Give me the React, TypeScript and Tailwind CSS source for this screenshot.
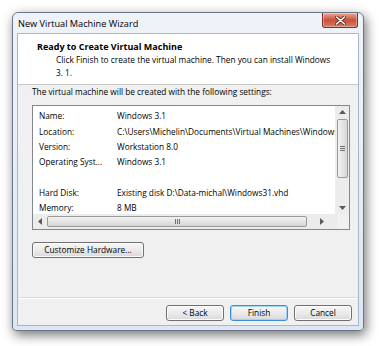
const rows = [
  { label: "Name:", value: "Windows 3.1" },
  { label: "Location:", value: "C:\\Users\\Michelin\\Documents\\Virtual Machines\\Windows 3.1" },
  { label: "Version:", value: "Workstation 8.0" },
  { label: "Operating Syst...", value: "Windows 3.1" },
  { label: "", value: "" },
  { label: "Hard Disk:", value: "Existing disk D:\\Data-michal\\Windows31.vhd" },
  { label: "Memory:", value: "8 MB" },
  { label: "Network Adapter:", value: "NAT" },
];

const WinButton = ({ text, width, primary }: { text: string; width: string; primary?: boolean }) => (
  <div
    className={`${width} flex h-[16px] items-center justify-center rounded-[3px] border bg-gradient-to-b from-[#f6f6f6] via-[#ebebeb] to-[#d9d9d9] text-[8.3px] text-black ${
      primary ? "border-[#3c8ed8] shadow-[inset_0_0_0_1px_#9fd4f5]" : "border-[#707070] shadow-[inset_0_0_0_1px_#fcfcfc]"
    }`}
  >
    {text}
  </div>
);

const Arrow = ({ dir }: { dir: "up" | "down" | "left" | "right" }) => {
  const pts = {
    up: "0,4 3.5,0 7,4",
    down: "0,0 3.5,4 7,0",
    left: "4,0 0,3.5 4,7",
    right: "0,0 4,3.5 0,7",
  }[dir];
  const vertical = dir === "up" || dir === "down";
  return (
    <svg width={vertical ? 7 : 4} height={vertical ? 4 : 7} viewBox={vertical ? "0 0 7 4" : "0 0 4 7"}>
      <polygon points={pts} fill="#5a5a5a" />
    </svg>
  );
};

export default function App() {
  return (
    <div className="h-[346px] w-[379px] bg-white pl-[12px] pt-[12px]" style={{ fontFamily: '"Open Sans", "Noto Sans", sans-serif' }}>
      <div className="flex h-[319px] w-[352px] flex-col rounded-t-[6px] rounded-b-[4px] border border-[#6b7786] bg-gradient-to-b from-[#eef3f9] to-[#dce7f3] shadow-[2px_4px_12px_rgba(0,0,0,0.55)]">
        {/* title bar */}
        <div className="flex h-[20px] items-start justify-between pl-[5px] pr-[5px]">
          <span className="pt-[5px] text-[9.2px] leading-[12px] text-black">New Virtual Machine Wizard</span>
          <div className="flex h-[15px] w-[36px] items-center justify-center rounded-b-[3px] border border-t-0 border-[#7a3030] bg-gradient-to-b from-[#e8a99a] via-[#c9503c] to-[#d67a5e] shadow-[inset_0_0_0_1px_rgba(255,255,255,0.35)]">
            <svg width="11" height="9" viewBox="0 0 11 9">
              <path d="M1.5 1 L9.5 8 M9.5 1 L1.5 8" stroke="#5a2a22" strokeWidth="3.2" strokeLinecap="round" />
              <path d="M1.5 1 L9.5 8 M9.5 1 L1.5 8" stroke="#ffffff" strokeWidth="1.6" strokeLinecap="round" />
            </svg>
          </div>
        </div>

        {/* client area */}
        <div className="mx-[4px] flex h-[293px] flex-col border border-[#a8b6c6] bg-[#f0f0f0]">
          <div className="h-[51px] border-b border-[#c8c8c8] bg-white pl-[19px] pt-[6px] text-black">
            <div className="text-[9px] font-bold leading-[13px]">Ready to Create Virtual Machine</div>
            <div className="pl-[19px] text-[8.3px] leading-[13px]">
              Click Finish to create the virtual machine. Then you can install Windows
              <br />
              3. 1.
            </div>
          </div>

          <div className="flex flex-1 flex-col pl-[14px] pt-[1px]">
            <div className="text-[8.3px] leading-[12px] text-black">The virtual machine will be created with the following settings:</div>

            <div className="mt-[7px] flex h-[125px] w-[318px] flex-col border border-[#828790] bg-white">
              <div className="flex h-[108px] overflow-hidden">
                <div className="flex-1 overflow-hidden pl-[6px] pt-[3px]">
                  {rows.map((r, i) => (
                    <div key={i} className="flex h-[15.3px] items-center whitespace-nowrap text-[8.3px] text-black">
                      <span className="w-[78px] shrink-0">{r.label}</span>
                      <span>{r.value}</span>
                    </div>
                  ))}
                </div>
                <div className="flex w-[14px] shrink-0 flex-col items-center bg-[#ececec] pt-[4px]">
                  <Arrow dir="up" />
                  <div className="mt-[5px] flex h-[59px] w-[11px] flex-col items-center justify-center gap-[1px] rounded-[2px] border border-[#9a9a9a] bg-gradient-to-r from-[#f2f2f2] to-[#d6d6d6]">
                    <div className="h-px w-[5px] bg-[#707070]" />
                    <div className="h-px w-[5px] bg-[#707070]" />
                    <div className="h-px w-[5px] bg-[#707070]" />
                  </div>
                  <div className="flex-1" />
                  <div className="pb-[4px]">
                    <Arrow dir="down" />
                  </div>
                </div>
              </div>
              <div className="flex h-[15px] items-center bg-[#ececec]">
                <div className="flex w-[14px] justify-center">
                  <Arrow dir="left" />
                </div>
                <div className="flex h-[11px] w-[260px] items-center justify-center gap-[1px] rounded-[2px] border border-[#9a9a9a] bg-gradient-to-b from-[#f2f2f2] to-[#d6d6d6]">
                  <div className="h-[5px] w-px bg-[#707070]" />
                  <div className="h-[5px] w-px bg-[#707070]" />
                  <div className="h-[5px] w-px bg-[#707070]" />
                </div>
                <div className="flex w-[30px] justify-center">
                  <Arrow dir="right" />
                </div>
                <div className="h-full flex-1 bg-[#f0f0f0]" />
              </div>
            </div>

            <div className="mt-[12px]">
              <WinButton text="Customize Hardware..." width="w-[112px]" />
            </div>
          </div>

          <div className="h-[28px] border-t border-[#dcdcdc] shadow-[inset_0_1px_0_#ffffff]">
            <div className="flex justify-end gap-[6px] pr-[6px] pt-[7px]">
              <WinButton text="< Back" width="w-[58px]" />
              <WinButton text="Finish" width="w-[58px]" primary />
              <WinButton text="Cancel" width="w-[58px]" />
            </div>
          </div>
        </div>
      </div>
    </div>
  );
}
